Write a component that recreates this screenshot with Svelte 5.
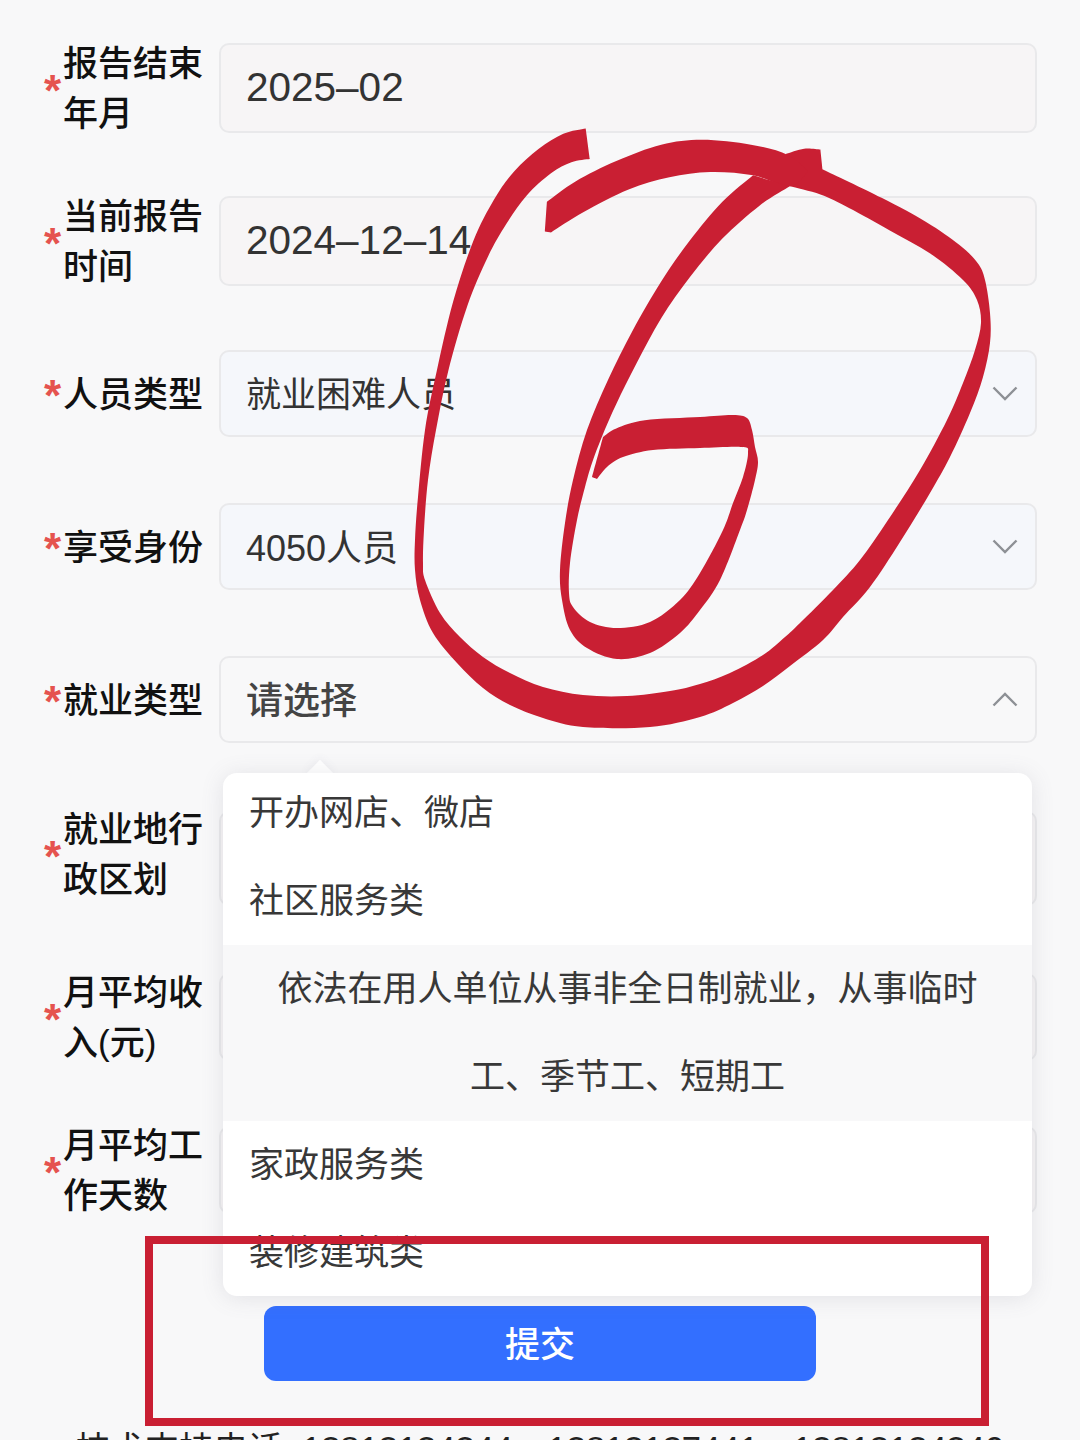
<script>
  const rows = [
    { lines: ['报告结束', '年月'], value: '2025–02', kind: 'ro', h: 90, gap: 63 },
    { lines: ['当前报告', '时间'], value: '2024–12–14', kind: 'ro', h: 90, gap: 64 },
    { lines: ['人员类型'], value: '就业困难人员', kind: 'sel', h: 87, gap: 66 },
    { lines: ['享受身份'], value: '4050人员', kind: 'sel num', h: 87, gap: 66 },
    { lines: ['就业类型'], value: '请选择', kind: 'open', h: 87, gap: 68 },
    { lines: ['就业地行', '政区划'], value: '', kind: 'ro', h: 95, gap: 67, shift: true },
    { lines: ['月平均收', '入(元)'], value: '', kind: 'ro', h: 88, gap: 65 },
    { lines: ['月平均工', '作天数'], value: '', kind: 'ro', h: 88, gap: 0 }
  ];
  const options = [
    { text: '开办网店、微店' },
    { text: '社区服务类' },
    { text: '依法在用人单位从事非全日制就业，从事临时工、季节工、短期工', active: true },
    { text: '家政服务类' },
    { text: '装修建筑类' }
  ];

  // Traced top part was read off a 2.45x crop at (400,110).
  const Z = (x, y) => [+(400 + x / 2.45).toFixed(1), +(110 + y / 2.45).toFixed(1)];

  // Catmull-Rom through each run of points; runs meet at sharp corners.
  function smooth(runs) {
    let d = '';
    runs.forEach((p, r) => {
      d += (r === 0 ? 'M' : 'L') + `${p[0][0]} ${p[0][1]}`;
      for (let i = 0; i < p.length - 1; i++) {
        const a = p[i - 1] || p[i], b = p[i], c = p[i + 1], e = p[i + 2] || c;
        const c1 = [b[0] + (c[0] - a[0]) / 6, b[1] + (c[1] - a[1]) / 6];
        const c2 = [c[0] - (e[0] - b[0]) / 6, c[1] - (e[1] - b[1]) / 6];
        d += `C${c1[0].toFixed(1)} ${c1[1].toFixed(1)} ${c2[0].toFixed(1)} ${c2[1].toFixed(1)} ${c[0]} ${c[1]}`;
      }
    });
    return d + 'Z';
  }

  const loop = smooth([
    [Z(455,45),Z(400,58),Z(340,95),Z(280,150),Z(230,220),Z(180,320),Z(130,470),Z(90,640),[425,430],[418,497],[415,540],[415,570],[420,600],[433,633],[457,663],[483,688],[510,705],[543,718],[583,727],[650,727],[700,717],[733,703],[763,686],[790,666],[823,640],[843,617],[870,587],[900,542],[930,493],[950,457],[970,413],[983,377],[990,343],[990,313],[985,280],Z(1415,375),Z(1370,330),Z(1290,275),Z(1180,215),Z(1035,145)],
    [Z(1035,145),Z(1030,97)],
    [Z(1030,97),Z(990,95),Z(945,108)],
    [Z(945,108),Z(955,187)],
    [Z(955,187),Z(1030,207),Z(1100,240),Z(1200,295),Z(1300,352),[963,280],[977,300],[981,323],[975,350],[963,383],[947,420],[920,470],[888,520],[860,560],[833,590],[800,623],[785,637],[763,655],[730,673],[700,684],[670,691],[627,696],[583,695],[543,687],[510,673],[483,657],[460,637],[440,613],[425,580],[423,563],[424,530],[428,480],[436,430],Z(118,640),Z(165,480),Z(215,360),Z(260,280),Z(310,210),Z(370,155),Z(420,128),Z(465,120)],
    [Z(465,120),Z(455,45)]
  ]);
  const arc = smooth([
    [Z(360,225),Z(430,175),Z(530,125),Z(640,85),Z(740,73),Z(860,85),Z(950,110),Z(1000,150)],
    [Z(1000,150),Z(955,187),Z(865,160),Z(760,152),Z(660,165),Z(560,195),Z(450,250),Z(370,300)],
    [Z(370,300),Z(355,298)],
    [Z(355,298),Z(360,225)]
  ]);
  const inner = smooth([
    [Z(865,160),Z(790,225),Z(710,320),Z(640,420),Z(570,540),Z(510,660),[587,430],[573,480],[565,523],[560,570],[562,600],[570,630],[587,648],[617,659],[650,653],[680,633],[700,610],[720,580],[740,530],[747,510],[755,480],[758,462],[755,447],[752,430],[747,418],[733,415],[700,417],Z(600,760),Z(530,780),[603,437]],
    [[603,437],[592,477]],
    [[592,477],[597,479]],
    [[597,479],[607,467],[623,457],[653,450],[700,448],[742,447],[748,453],[743,477],[733,503],[723,530],[700,573],[680,600],[650,622],[617,628],[590,622],[573,607],[569,593],[570,563],[577,520],[585,487],[592,463],Z(495,800),Z(530,720),Z(580,620),Z(640,510),Z(710,410),Z(790,315),Z(880,235),Z(955,187)],
    [Z(955,187),Z(865,160)]
  ]);
</script>

<div class="page">
  <div class="form">
    {#each rows as r}
      <div class="row" style="height:{r.h}px;margin-bottom:{r.gap}px">
        <span class="star" class:shift={r.shift}>*</span>
        <div class="label" class:shift={r.shift}>
          {#each r.lines as l}<div>{l}</div>{/each}
        </div>
        <div class="field {r.kind}">
          <span class="value">{r.value}</span>
          {#if r.kind !== 'ro'}
            <svg class="chev" viewBox="0 0 26 15" width="26" height="15" aria-hidden="true">
              {#if r.kind === 'open'}
                <path d="M1.5 13.5 13 2 24.5 13.5" />
              {:else}
                <path d="M1.5 1.5 13 13 24.5 1.5" />
              {/if}
            </svg>
          {/if}
        </div>
      </div>
    {/each}
  </div>

  <button class="submit">提交</button>
  <p class="foot">技术支持电话: 13813134344、13813137441、13813134340</p>

  <div class="popper">
    <span class="arrow"></span>
    <div class="menu">
      <div class="list">
        {#each options as o}
          <div class="opt" class:active={o.active}>{o.text}</div>
        {/each}
      </div>
    </div>
  </div>

  <svg class="ink" viewBox="0 0 1080 1440" aria-hidden="true">
    <path d={loop} />
    <path d={arc} />
    <path d={inner} />
  </svg>
  <div class="frame"></div>
</div>

<style>
  :global(body) {
    margin: 0;
    background: #f8f8f9;
  }
  .page {
    position: relative;
    width: 1080px;
    height: 1440px;
    overflow: hidden;
    background: #f8f8f9;
    font-family: "Liberation Sans", "Noto Sans CJK SC", sans-serif;
    font-size: 35px;
    color: #333;
  }
  .form {
    padding: 43px 43px 0 44px;
  }
  .row {
    display: flex;
    align-items: center;
  }
  .star {
    width: 19px;
    height: 18px;
    margin-top: -15px;
    font-family: "Liberation Sans", sans-serif;
    font-size: 44px;
    font-weight: 700;
    line-height: 38px;
    color: #e5534f;
    flex: none;
  }
  .star.shift {
    margin-top: -23px;
  }
  .label {
    width: 156px;
    flex: none;
    margin-top: 2px;
    font-weight: 500;
    font-size: 35px;
    line-height: 50px;
    color: #111;
    white-space: nowrap;
  }
  .label.shift {
    margin-top: -8px;
  }
  .field {
    flex: 1;
    height: 100%;
    box-sizing: border-box;
    display: flex;
    align-items: center;
    justify-content: space-between;
    padding: 0 17px 4px 25px;
    border: 2px solid #e9e9eb;
    border-radius: 10px;
    background: #f7f5f6;
  }
  .field.ro {
    padding-bottom: 1px;
  }
  .field.ro .value {
    font-size: 40.5px;
  }
  .field.sel {
    background: #f5f7fb;
  }
  .field.num .value {
    font-size: 36px;
  }
  .field.open {
    background: #f8f8f9;
  }
  .field.open .value {
    font-size: 37px;
    font-weight: 500;
    color: #444;
  }
  .value {
    white-space: nowrap;
  }
  .chev {
    flex: none;
    margin-top: 4px;
  }
  .chev path {
    fill: none;
    stroke: #8d9095;
    stroke-width: 2.4;
  }
  .submit {
    display: block;
    width: 552px;
    height: 75px;
    margin: 92px auto 0;
    padding: 0 0 4px;
    border: 0;
    border-radius: 12px;
    background: #336fff;
    color: #fff;
    font: 500 35px "Liberation Sans", "Noto Sans CJK SC", sans-serif;
  }
  .foot {
    margin: 43px 0 0;
    text-align: center;
    font-size: 34.5px;
    line-height: 50px;
    color: #222;
    white-space: nowrap;
  }
  .popper {
    position: absolute;
    left: 223px;
    top: 773px;
    width: 809px;
    height: 523px;
  }
  .arrow {
    position: absolute;
    left: 87px;
    top: -9px;
    width: 20px;
    height: 20px;
    background: #fff;
    transform: rotate(45deg);
    box-shadow: -2px -2px 8px rgba(100, 110, 130, 0.06);
  }
  .menu {
    position: relative;
    height: 100%;
    overflow: hidden;
    border-radius: 14px;
    background: #fff;
    box-shadow: 0 2px 22px rgba(110, 115, 130, 0.16);
  }
  .list {
    margin-top: -4px;
  }
  .opt {
    padding: 0 26px;
    line-height: 88px;
    color: #383838;
  }
  .opt.active {
    padding: 0 50px;
    background: #f8f8f9;
    text-align: center;
  }
  .ink {
    position: absolute;
    left: 0;
    top: 0;
    width: 1080px;
    height: 1440px;
  }
  .ink path {
    fill: #c91f33;
  }
  .frame {
    position: absolute;
    left: 145px;
    top: 1236px;
    width: 844px;
    height: 190px;
    box-sizing: border-box;
    border: 8px solid #c91f33;
  }
</style>
